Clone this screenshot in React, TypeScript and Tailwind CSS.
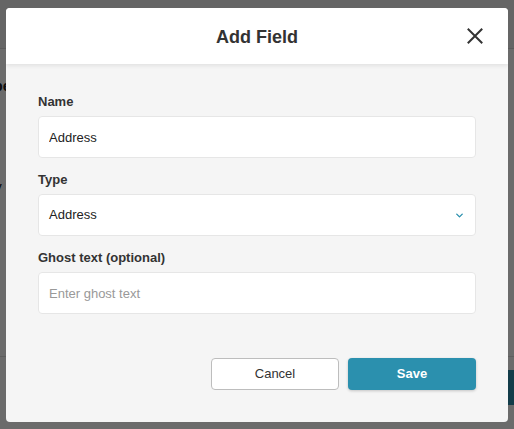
import { ChevronDown } from 'lucide-react';

const font = { fontFamily: '"Liberation Sans", Arial, sans-serif' };

function Field({ label, children }: { label: string; children: React.ReactNode }) {
  return (
    <div className="flex flex-col">
      <label className="mb-[6px] text-[13px] leading-[16px] font-bold text-[#333]">{label}</label>
      {children}
    </div>
  );
}

export default function App() {
  return (
    <div className="relative h-[429px] w-[514px] overflow-hidden bg-white" style={font}>
      {/* page behind the dialog */}
      <div className="h-[49px] border-b border-[#d8d8d8] bg-[#f0f0f0]" />
      <div className="flex flex-col -ml-[24px] text-[15px] text-[#222]">
        <div className="mt-[26px] font-bold">Label</div>
        <div className="mt-[7px]">ID</div>
        <div className="mt-[49px]">Key</div>
      </div>
      <div className="absolute right-[-40px] top-[370px] h-[35px] w-[120px] bg-[#2b90ae]" />
      <div className="absolute left-0 right-0 top-[356px] border-t border-[#e0e0e0]" />

      {/* overlay */}
      <div className="absolute inset-0 flex items-start justify-center bg-black/[0.58] pt-[8px]">
        <div className="w-[502px] overflow-hidden rounded-[4px] bg-[#f5f5f5]">
          <div className="relative z-10 flex h-[56px] items-center justify-center bg-white pt-[2px] shadow-[0_2px_4px_rgba(0,0,0,0.08)]">
            <div className="text-[18px] font-bold text-[#333]">Add Field</div>
            <button type="button" className="absolute right-[25px] top-[20px] text-[#333]">
              <svg width="16" height="16" viewBox="0 0 16 16" fill="none" stroke="currentColor" strokeWidth="2" strokeLinecap="square">
                <path d="M1.5 1.5L14.5 14.5M14.5 1.5L1.5 14.5" />
              </svg>
            </button>
          </div>

          <div className="flex flex-col gap-[14px] px-[32px] pt-[30px]">
            <Field label="Name">
              <input
                type="text"
                defaultValue="Address"
                className="h-[42px] rounded-[4px] border border-[#e6e6e6] bg-white px-[10px] text-[13px] text-[#222] outline-none"
              />
            </Field>
            <Field label="Type">
              <div className="relative flex h-[42px] items-center rounded-[4px] border border-[#e6e6e6] bg-white px-[10px] text-[13px] text-[#222]">
                Address
                <ChevronDown size={11} strokeWidth={3} className="absolute right-[10px] top-[15px] text-[#2b90ae]" />
              </div>
            </Field>
            <Field label="Ghost text (optional)">
              <input
                type="text"
                placeholder="Enter ghost text"
                className="h-[42px] rounded-[4px] border border-[#e6e6e6] bg-white px-[10px] text-[13px] text-[#222] outline-none placeholder:text-[#999]"
              />
            </Field>
          </div>

          <div className="flex justify-end gap-[9px] px-[32px] pt-[44px] pb-[32px]">
            <button
              type="button"
              className="h-[32px] w-[128px] rounded-[4px] border border-[#bdbdbd] bg-white text-[13px] text-[#333]"
            >
              Cancel
            </button>
            <button
              type="button"
              className="h-[32px] w-[128px] rounded-[4px] bg-[#2b90ae] text-[13px] font-bold text-white shadow-[0_1px_3px_rgba(0,0,0,0.2)]"
            >
              Save
            </button>
          </div>
        </div>
      </div>
    </div>
  );
}
